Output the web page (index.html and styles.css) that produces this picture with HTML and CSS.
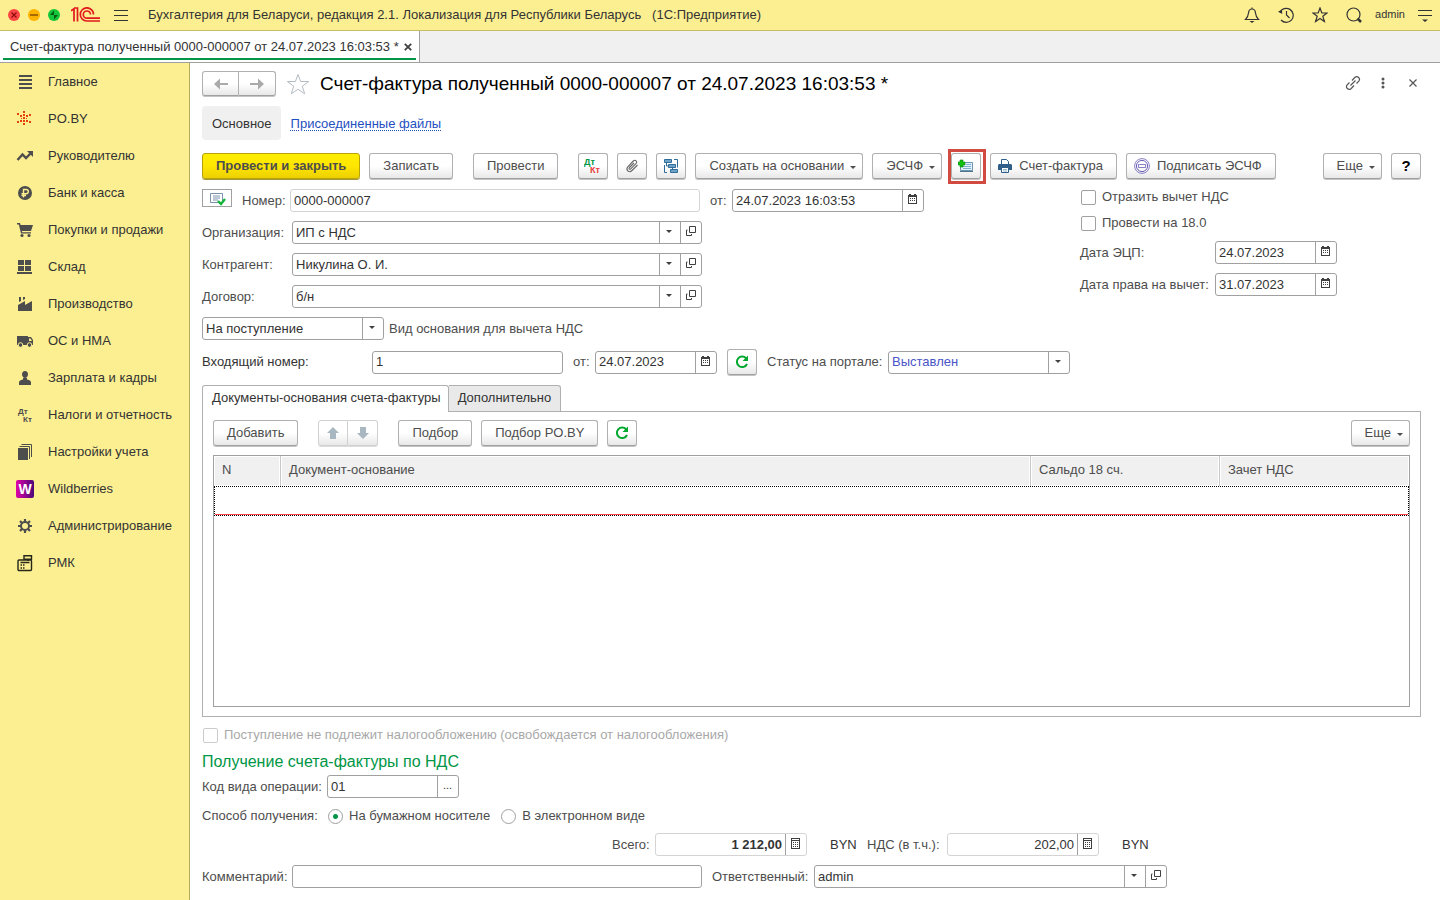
FILE: index.html
```html
<!DOCTYPE html>
<html lang="ru">
<head>
    <meta charset="UTF-8">
    <meta name="viewport" content="width=device-width, initial-scale=1.0">
    <title>Счет-фактура полученный</title>
    <link rel="stylesheet" href="styles.css">
</head>
<body>
    <!-- общие иконки -->
    <svg class="sprite" aria-hidden="true">
        <symbol id="i-calendar" viewBox="0 0 9 10">
            <path fill="#404040" d="M0 1h1V0h2v1h3V0h2v1h1v9H0zM1 3v6h7V3z"/>
            <path fill="#404040" d="M2 4h1v1H2zM4 4h1v1H4zM6 4h1v1H6zM2 6h1v1H2zM4 6h1v1H4zM6 6h1v1H6z"/>
        </symbol>
        <symbol id="i-calc" viewBox="0 0 9 11">
            <path fill="#404040" d="M0 0h9v11H0zM1 1v1h7V1zM1 3v7h7V3z"/>
            <path fill="#404040" d="M2 4h1v1H2zM4 4h1v1H4zM6 4h1v1H6zM2 6h1v1H2zM4 6h1v1H4zM6 6h1v1H6zM2 8h1v1H2zM4 8h1v1H4zM6 8h1v1H6z"/>
        </symbol>
        <symbol id="i-open" viewBox="0 0 10 10">
            <path fill="none" stroke="#404040" d="M3.500.500h6v6h-6zM1.500 4h-1v5.500h5V8"/>
        </symbol>
        <symbol id="i-refresh" viewBox="0 0 14 14">
            <path fill="none" stroke="#00a82d" stroke-width="2" d="M11.200 3.300A5.300 5.300 0 1 0 12 9"/>
            <path fill="#00a82d" d="M13 .500V6H7.500z"/>
        </symbol>
    </svg>

    <header class="titlebar">
        <div class="window-buttons">
            <button class="dot dot-close" aria-label="Закрыть окно"><svg viewBox="0 0 12 12"><path d="M3.500 3.500l5 5m0-5l-5 5" stroke="#8c1010" stroke-width="1.200"/></svg></button>
            <button class="dot dot-min" aria-label="Свернуть"><svg viewBox="0 0 12 12"><path d="M2 6h8" stroke="#9a6400" stroke-width="1.800"/></svg></button>
            <button class="dot dot-max" aria-label="Развернуть"><svg viewBox="0 0 12 12"><path d="M6 1.500v4.500H2zM6 10.500V6h4z" fill="#0a5a14"/></svg></button>
        </div>
        <svg class="logo" viewBox="0 0 30 16" fill="none" stroke="#e1181e" stroke-width="1.700">
            <path d="M0 3.800l3-2v12.700M3 1h3.500v13.500"/>
            <path d="M22.500 7.500A6.600 6.600 0 1 0 16 14H29"/>
            <path d="M19.500 7.500A3.600 3.600 0 1 0 16 11.200H29"/>
        </svg>
        <button class="icon-btn menu-btn" aria-label="Меню"><svg width="14" height="12" viewBox="0 0 14 12"><path d="M0 1.500h14M0 6.500h14M0 11.500h14" stroke="#333"/></svg></button>
        <div class="app-title">Бухгалтерия для Беларуси, редакция 2.1. Локализация для Республики Беларусь &nbsp; (1С:Предприятие)</div>
        <div class="titlebar-tools">
            <button class="icon-btn" aria-label="Уведомления"><svg width="16" height="16" viewBox="0 0 16 16"><path d="M1.500 12.500c2-2 2.700-3.500 3-6.500.2-2.500 1.300-4 3.500-4s3.300 1.500 3.500 4c.3 3 1 4.500 3 6.500zM8 .500V2" fill="none" stroke="#333" stroke-width="1.200"/><path d="M5.500 14h5L8 16z" fill="#333"/></svg></button>
            <button class="icon-btn" aria-label="История"><svg width="16" height="16" viewBox="0 0 16 16"><path d="M1.800 5.500A7 7 0 1 1 3 13M8.500 4v4l3 3" fill="none" stroke="#333" stroke-width="1.200"/><path d="M0 4.500l4-1.500.2 4z" fill="#333"/></svg></button>
            <button class="icon-btn" aria-label="Избранное"><svg width="16" height="16" viewBox="0 0 16 16"><path d="M8 1l1.800 5h5.200l-4.200 3.200 1.600 5.300L8 11.400l-4.400 3.100 1.600-5.300L1 6h5.200z" fill="none" stroke="#333" stroke-width="1.200"/></svg></button>
            <button class="icon-btn" aria-label="Поиск"><svg width="16" height="16" viewBox="0 0 16 16"><circle cx="7.500" cy="7.500" r="6.500" fill="none" stroke="#333" stroke-width="1.200"/><path d="M11.500 11.500l3.500 3.500" stroke="#333" stroke-width="2.500"/></svg></button>
        </div>
        <a class="user" href="#">admin</a>
        <button class="icon-btn" aria-label="Сервис"><svg width="14" height="13" viewBox="0 0 14 13"><path d="M0 1.500h14M0 6.500h14" stroke="#333"/><path d="M4 10.500h6L7 13z" fill="#333"/></svg></button>
    </header>

    <div class="window-tabs">
        <div class="window-tab">
            <span>Счет-фактура полученный 0000-000007 от 24.07.2023 16:03:53 *</span>
            <button class="icon-btn" aria-label="Закрыть вкладку"><svg width="8" height="8" viewBox="0 0 8 8"><path d="M.800.800l6.400 6.400m0-6.400L.800 7.200" stroke="#404040" stroke-width="1.800"/></svg></button>
        </div>
    </div>

    <div class="workspace">
        <nav class="sidebar">
            <a href="#"><svg viewBox="0 0 18 18" fill="#4d4d4d"><path d="M3 2h13v2H3zM3 6h13v2H3zM3 10h13v2H3zM3 14h13v2H3z"/></svg>Главное</a>
            <a href="#"><svg viewBox="0 0 18 18" fill="#e8420c"><path d="M7 1h2v2H7zM1 3h2v2H1zM13 4h2v2h-2zM7 4h2v2H7zM4 5h2v2H4zM10 5h2v2h-2zM7 7h2v2H7zM5 8h1v1H5zM10 8h1v1h-1zM4 10h2v2H4zM7 10h2v2H7zM10 10h2v2h-2zM1 11h2v2H1zM13 11h2v2h-2zM7 13h2v2H7z"/></svg>PO.BY</a>
            <a href="#"><svg viewBox="0 0 18 18"><path d="M1.500 13l5-5.500 3.500 3.500 5-5" fill="none" stroke="#4d4d4d" stroke-width="2.400"/><path d="M11 4h6v6z" fill="#4d4d4d"/></svg>Руководителю</a>
            <a href="#"><svg viewBox="0 0 18 18"><circle cx="9" cy="9" r="7" fill="#4d4d4d"/><path d="M7.500 13.500V5.500h2.700a2 2 0 0 1 0 4.200H5.500M5.500 11.500H10" fill="none" stroke="#fcef91" stroke-width="1.400"/></svg>Банк и касса</a>
            <a href="#"><svg viewBox="0 0 18 18" fill="#4d4d4d"><path d="M1 2h3l.6 2H17l-2 6H5.800l.4 1.200H15v1.300H5L2.800 3.400H1z"/><circle cx="6" cy="14.500" r="1.600"/><circle cx="13" cy="14.500" r="1.600"/></svg>Покупки и продажи</a>
            <a href="#"><svg viewBox="0 0 18 18" fill="#4d4d4d"><path d="M2 2h6v5H2zM9 2h6v5H9zM2 8h6v5H2zM9 8h6v5H9zM1 14h15v2H1z"/></svg>Склад</a>
            <a href="#"><svg viewBox="0 0 18 18" fill="#4d4d4d"><path d="M3 2h2v4L3 7zM7 2h2v2L7 5zM2 10l7-4v4l7-4v10H2z"/></svg>Производство</a>
            <a href="#"><svg viewBox="0 0 18 18" fill="#4d4d4d"><path d="M1 4h11v9H1zM12 5h3l2 3v5h-5z"/><path d="M13 6.500h1.500L16 9h-3z" fill="#fcef91"/><g stroke="#fcef91"><circle cx="4.500" cy="13" r="2.300"/><circle cx="13.500" cy="13" r="2.300"/></g></svg>ОС и НМА</a>
            <a href="#"><svg viewBox="0 0 18 18" fill="#4d4d4d"><path d="M9 2c2 0 3 1.300 3 3.300S10.800 9 9 9 6 7.300 6 5.300 7 2 9 2zM7 9h4v1.500c3 .5 4 1.500 4 3V16H3v-2.500c0-1.500 1-2.500 4-3z"/></svg>Зарплата и кадры</a>
            <a href="#"><svg viewBox="0 0 18 18" class="dtkt"><text x="2" y="8" fill="#4d4d4d">Дт</text><text x="7" y="16" fill="#4d4d4d">Кт</text></svg>Налоги и отчетность</a>
            <a href="#"><svg viewBox="0 0 18 18"><path d="M2 5h10v12H2z" fill="#4d4d4d"/><path d="M3.500 3.500h10V16M5.500 1.500h10V14" fill="none" stroke="#4d4d4d"/></svg>Настройки учета</a>
            <a href="#"><svg viewBox="0 0 18 18"><defs><linearGradient id="wb"><stop offset="0" stop-color="#e000a8"/><stop offset="1" stop-color="#4a0a78"/></linearGradient></defs><rect width="18" height="18" rx="2" fill="url(#wb)"/><text class="wb" x="9" y="14" fill="#fff" text-anchor="middle">W</text></svg>Wildberries</a>
            <a href="#"><svg viewBox="0 0 18 18" fill="none" stroke="#4d4d4d"><circle cx="9" cy="9" r="4" stroke-width="2"/><path d="M9 2v3M9 13v3M2 9h3M13 9h3M4 4l2.200 2.200M11.800 11.800L14 14M14 4l-2.200 2.200M6.200 11.800L4 14" stroke-width="2.200"/></svg>Администрирование</a>
            <a href="#"><svg viewBox="0 0 18 18" fill="none" stroke="#26261a" stroke-width="1.400"><rect x="2" y="6" width="13.500" height="10.500" rx="1"/><path d="M8 1.800h7.500v3.400H8zM12 5v2M4.500 8.500h9"/><path d="M4.500 11h1.500M7 11h1.500M4.500 14h1.500M7 14h1.500" stroke-width="1.600"/></svg>РМК</a>
        </nav>

        <main class="form">
            <div class="form-header">
                <div class="btn-pair history">
                    <button class="btn" aria-label="Назад"><svg width="14" height="12" viewBox="0 0 14 12"><path d="M0 6l6-5.500V5h8v2H6v4.500z" fill="#aaa"/></svg></button>
                    <button class="btn" aria-label="Вперед"><svg width="14" height="12" viewBox="0 0 14 12"><path d="M14 6L8 .500V5H0v2h8v4.500z" fill="#aaa"/></svg></button>
                </div>
                <button class="icon-btn" aria-label="В избранное"><svg width="24" height="22" viewBox="0 0 24 22"><path d="M12 1.500l2.600 7h8l-6.300 4.800 2.400 7.500L12 16.300l-6.700 4.500 2.400-7.500L1.400 8.500h8z" fill="#fff" stroke="#b3bcc4"/></svg></button>
                <h1>Счет-фактура полученный 0000-000007 от 24.07.2023 16:03:53 *</h1>
                <div class="form-header-tools">
                    <button class="icon-btn" aria-label="Ссылка"><svg width="16" height="16" viewBox="0 0 16 16" fill="none" stroke="#555" stroke-width="1.200"><path d="M5.500 10.500l5-5M7 5.500L10 2.300a2.700 2.700 0 0 1 3.800 3.800L11.500 8.500M9 10.500L6 13.700a2.700 2.700 0 0 1-3.800-3.800L4.500 7.500"/></svg></button>
                    <button class="icon-btn" aria-label="Еще действия"><svg width="4" height="12" viewBox="0 0 4 12" fill="#555"><circle cx="2" cy="2" r="1.500"/><circle cx="2" cy="6" r="1.500"/><circle cx="2" cy="10" r="1.500"/></svg></button>
                    <button class="icon-btn" aria-label="Закрыть"><svg width="8" height="8" viewBox="0 0 8 8"><path d="M.500.500l7 7m0-7l-7 7" stroke="#555" stroke-width="1.200"/></svg></button>
                </div>
            </div>

            <div class="form-nav">
                <a class="active" href="#">Основное</a>
                <a href="#"><span>Присоединенные файлы</span></a>
            </div>

            <div class="toolbar">
                <div class="btn-group">
                    <button class="btn btn-primary">Провести и закрыть</button>
                    <button class="btn">Записать</button>
                </div>
                <button class="btn">Провести</button>
                <div class="btn-group">
                    <button class="btn btn-icon" aria-label="Проводки"><svg class="dtkt" width="18" height="18" viewBox="0 0 18 18"><text x="0" y="8" fill="#009646">Дт</text><text x="6" y="16" fill="#e63c3c">Кт</text></svg></button>
                    <button class="btn btn-icon" aria-label="Файлы"><svg width="16" height="16" viewBox="0 0 16 16"><path d="M13.500 7L8 12.500c-3 3-6.800-.800-4-4L9.300 3c2-1.900 4.600.500 2.700 2.600l-5.300 5.300c-1.200 1-2.300-.300-1.300-1.400L10 5" fill="none" stroke="#666" stroke-width="1.100"/></svg></button>
                    <button class="btn btn-icon" aria-label="Структура подчиненности"><svg width="16" height="16" viewBox="0 0 16 16" fill="#6fa3c7" stroke="#2f6d9b"><path d="M1.500 1.500h7v3h-7zM5.500 6.500h7v3h-7zM7.500 11.500h7v3h-7z"/><path d="M11 1.500h3.500v8M4 14.500H1.500V7M3.500 4.500v3.500h2M9.500 9.500v2" fill="none"/></svg></button>
                    <button class="btn btn-menu">Создать на основании</button>
                    <button class="btn btn-menu">ЭСЧФ</button>
                    <button class="btn btn-icon marked" aria-label="Добавить ЭСЧФ"><svg width="16" height="14" viewBox="0 0 16 14"><path d="M2.500 3.500h12v8h-12z" fill="#e6f2fb" stroke="#6c93ac"/><path d="M2 12.500h13" stroke="#4c7590"/><path d="M8 5.500h5M5 7.500h8M5 9.500h8" stroke="#7fb0d0"/><path d="M2 1h3v2h2v3H5v2H2V6H0V3h2z" fill="#10c010" stroke="#078507" stroke-width=".600"/></svg></button>
                    <button class="btn btn-with-icon"><svg width="14" height="14" viewBox="0 0 14 14"><path d="M3.500 5V.500h5l2 2V5" fill="#fff" stroke="#2f5f88"/><path d="M1 5h12l1 1v5H0V6z" fill="#2f5f88"/><path d="M3.500 8.500h7v5h-7z" fill="#fff" stroke="#2f5f88"/><path d="M5 10.500h4M5 12h4" stroke="#9db8cc"/></svg>Счет-фактура</button>
                    <button class="btn btn-with-icon"><svg width="16" height="16" viewBox="0 0 16 16" fill="none" stroke="#6a5fb8"><circle cx="8" cy="8" r="7.400" stroke-width=".800"/><circle cx="8" cy="8" r="5.600"/><path d="M4.500 6.500h7v3h-7z" stroke-width=".800"/></svg>Подписать ЭСЧФ</button>
                </div>
                <div class="btn-group toolbar-right">
                    <button class="btn btn-menu">Еще</button>
                    <button class="btn btn-icon help">?</button>
                </div>
            </div>

            <div class="form-columns">
                <div class="form-left">
                    <div class="row">
                        <button class="state-btn" aria-label="Проведен"><svg width="16" height="14" viewBox="0 0 16 14"><path d="M.500 1.500h12v9H.500z" fill="#fff" stroke="#7b93ad"/><path d="M3 4h7M3 6h7M3 8h5" stroke="#7b93ad"/><path d="M8 9l3 3 4-5" fill="none" stroke="#12b53a" stroke-width="2.400"/></svg></button>
                        <label for="number">Номер:</label>
                        <div class="field readonly w-main"><input id="number" type="text" value="0000-000007" readonly></div>
                        <label class="label-from" for="date">от:</label>
                        <div class="field w-datetime"><input id="date" type="text" value="24.07.2023 16:03:53"><button aria-label="Календарь"><svg width="9" height="10"><use href="#i-calendar"/></svg></button></div>
                    </div>
                    <div class="row">
                        <label class="label-col" for="org">Организация:</label>
                        <div class="field w-main"><select id="org"><option>ИП с НДС</option></select><button aria-label="Открыть"><svg width="10" height="10"><use href="#i-open"/></svg></button></div>
                    </div>
                    <div class="row">
                        <label class="label-col" for="partner">Контрагент:</label>
                        <div class="field w-main"><select id="partner"><option>Никулина О. И.</option></select><button aria-label="Открыть"><svg width="10" height="10"><use href="#i-open"/></svg></button></div>
                    </div>
                    <div class="row">
                        <label class="label-col" for="contract">Договор:</label>
                        <div class="field w-main"><select id="contract"><option>б/н</option></select><button aria-label="Открыть"><svg width="10" height="10"><use href="#i-open"/></svg></button></div>
                    </div>
                    <div class="row">
                        <div class="field w-kind"><select id="kind"><option>На поступление</option></select></div>
                        <label for="kind" class="label-after">Вид основания для вычета НДС</label>
                    </div>
                </div>

                <div class="form-right">
                    <label class="check"><input type="checkbox">Отразить вычет НДС</label>
                    <label class="check"><input type="checkbox">Провести на 18.0</label>
                    <div class="row">
                        <label class="label-date" for="date-sign">Дата ЭЦП:</label>
                        <div class="field w-date"><input id="date-sign" type="text" value="24.07.2023"><button aria-label="Календарь"><svg width="9" height="10"><use href="#i-calendar"/></svg></button></div>
                    </div>
                    <div class="row">
                        <label class="label-date" for="date-vat">Дата права на вычет:</label>
                        <div class="field w-date"><input id="date-vat" type="text" value="31.07.2023"><button aria-label="Календарь"><svg width="9" height="10"><use href="#i-calendar"/></svg></button></div>
                    </div>
                </div>
            </div>

            <div class="row incoming">
                <label class="label-incoming" for="in-number">Входящий номер:</label>
                <div class="field w-incoming"><input id="in-number" type="text" value="1"></div>
                <label class="label-from" for="in-date">от:</label>
                <div class="field w-date"><input id="in-date" type="text" value="24.07.2023"><button aria-label="Календарь"><svg width="9" height="10"><use href="#i-calendar"/></svg></button></div>
                <button class="btn btn-icon refresh" aria-label="Обновить статус"><svg width="14" height="14"><use href="#i-refresh"/></svg></button>
                <label class="label-status" for="status">Статус на портале:</label>
                <div class="field w-kind status"><select id="status"><option>Выставлен</option></select></div>
            </div>

            <div class="tabs">
                <button class="tab active">Документы-основания счета-фактуры</button>
                <button class="tab">Дополнительно</button>
            </div>
            <section class="tab-panel">
                <div class="toolbar panel-toolbar">
                    <button class="btn">Добавить</button>
                    <div class="btn-pair disabled">
                        <button class="btn" aria-label="Вверх" disabled><svg width="12" height="12" viewBox="0 0 12 12"><path d="M6 0l6 6H9v6H3V6H0z" fill="#a9b8c0"/></svg></button>
                        <button class="btn" aria-label="Вниз" disabled><svg width="12" height="12" viewBox="0 0 12 12"><path d="M6 12l6-6H9V0H3v6H0z" fill="#a9b8c0"/></svg></button>
                    </div>
                    <div class="btn-group">
                        <button class="btn">Подбор</button>
                        <button class="btn">Подбор PO.BY</button>
                        <button class="btn btn-icon" aria-label="Обновить"><svg width="14" height="14"><use href="#i-refresh"/></svg></button>
                    </div>
                    <button class="btn btn-menu toolbar-right">Еще</button>
                </div>
                <div class="table-box">
                    <table>
                        <thead>
                            <tr>
                                <th class="col-n">N</th>
                                <th>Документ-основание</th>
                                <th class="col-sum">Сальдо 18 сч.</th>
                                <th class="col-sum">Зачет НДС</th>
                            </tr>
                        </thead>
                        <tbody>
                            <tr>
                                <td colspan="4"><div class="empty-row"></div></td>
                            </tr>
                        </tbody>
                    </table>
                </div>
            </section>

            <label class="check check-disabled"><input type="checkbox" disabled>Поступление не подлежит налогообложению (освобождается от налогообложения)</label>

            <h2>Получение счета-фактуры по НДС</h2>

            <div class="row">
                <label class="label-short" for="op-code">Код вида операции:</label>
                <div class="field w-code"><input id="op-code" type="text" value="01"><button class="dots" aria-label="Выбрать">...</button></div>
            </div>

            <div class="row methods">
                <span class="label-short">Способ получения:</span>
                <label class="radio"><input type="radio" name="method" checked>На бумажном носителе</label>
                <label class="radio"><input type="radio" name="method">В электронном виде</label>
            </div>

            <div class="row totals">
                <label for="total">Всего:</label>
                <div class="field readonly w-sum total"><input id="total" type="text" value="1 212,00" readonly><button aria-label="Калькулятор"><svg width="9" height="11"><use href="#i-calc"/></svg></button></div>
                <span class="currency">BYN</span>
                <label class="label-vat" for="vat">НДС (в т.ч.):</label>
                <div class="field readonly w-sum"><input id="vat" type="text" value="202,00" readonly><button aria-label="Калькулятор"><svg width="9" height="11"><use href="#i-calc"/></svg></button></div>
                <span class="currency">BYN</span>
            </div>

            <div class="row">
                <label class="label-col" for="comment">Комментарий:</label>
                <div class="field w-main"><input id="comment" type="text"></div>
                <label class="label-owner" for="owner">Ответственный:</label>
                <div class="field w-owner"><select id="owner"><option>admin</option></select><button aria-label="Открыть"><svg width="10" height="10"><use href="#i-open"/></svg></button></div>
            </div>
        </main>
    </div>
</body>
</html>
```
FILE: styles.css
```css
* {
    box-sizing: border-box;
}

body {
    margin: 0;
    min-height: 100vh;
    display: flex;
    flex-direction: column;
    background: #fff;
    color: #4d4d4d;
    font-family: "Liberation Sans", Arial, sans-serif;
    font-size: 13px;
    line-height: 16px;
}

button,
input,
select {
    font: inherit;
    color: inherit;
    margin: 0;
}

button {
    cursor: pointer;
}

svg {
    display: block;
    flex: none;
}

.sprite {
    display: none;
}

.icon-btn {
    padding: 0;
    border: none;
    background: none;
}

/* заголовок окна */
.titlebar {
    display: flex;
    align-items: center;
    height: 31px;
    padding: 0 8px;
    background: #fcef91;
    border-bottom: 1px solid #c9bd62;
    color: #333;
}

.window-buttons {
    display: flex;
    gap: 8px;
}

.dot {
    width: 12px;
    height: 12px;
    padding: 0;
    border: none;
    border-radius: 50%;
}

.dot-close {
    background: #fb4646;
}

.dot-min {
    background: #fdb300;
}

.dot-max {
    background: #13c63a;
}

.logo {
    width: 30px;
    height: 16px;
    margin-left: 11px;
}

.menu-btn {
    margin: 0 20px 0 13px;
}

.app-title {
    flex: 1;
    white-space: nowrap;
}

.titlebar-tools {
    display: flex;
    gap: 18px;
}

.user {
    margin: 0 13px 2px;
    color: #333;
    font-size: 11px;
    text-decoration: none;
}

.window-tabs {
    display: flex;
    height: 32px;
    background: #f0f0f0;
    border-bottom: 1px solid #a0a0a0;
}

.window-tab {
    display: flex;
    align-items: center;
    gap: 5px;
    padding: 0 7px 0 10px;
    background: linear-gradient(#009646, #009646) 3px 27px / calc(100% - 6px) 2px no-repeat #fff;
    border-right: 1px solid #a0a0a0;
    color: #333;
    white-space: nowrap;
}

.workspace {
    flex: 1;
    display: flex;
}

/* разделы */
.sidebar {
    flex: none;
    width: 190px;
    background: #fcef91;
    border-right: 1px solid #b5aa5c;
}

.sidebar a {
    display: flex;
    align-items: center;
    gap: 14px;
    height: 37px;
    padding-left: 16px;
    color: #333;
    text-decoration: none;
    white-space: nowrap;
}

.sidebar svg {
    width: 18px;
    height: 18px;
}

.dtkt {
    font-size: 8px;
    font-weight: bold;
}

.btn .dtkt {
    font-size: 9px;
}

.wb {
    font-size: 14px;
    font-weight: bold;
}

/* форма */
.form {
    flex: 1;
    min-width: 0;
    display: flex;
    flex-direction: column;
    padding: 8px 19px 12px 12px;
}

.form-header {
    display: flex;
    align-items: center;
    height: 25px;
}

.form-header h1 {
    margin: 0 0 0 10px;
    color: #000;
    font-size: 19px;
    font-weight: normal;
    line-height: 24px;
    white-space: nowrap;
}

.form-header-tools {
    display: flex;
    align-items: center;
    gap: 14px;
    margin-left: auto;
    padding-bottom: 2px;
}

.form-header-tools .icon-btn {
    display: flex;
    justify-content: center;
    width: 16px;
}

.form-nav {
    display: flex;
    margin-top: 10px;
}

.form-nav a {
    padding: 10px 9px 8px 10px;
    border-radius: 4px;
    color: #1f4fbf;
    text-decoration: none;
}

.form-nav a span {
    text-decoration: underline dotted 1px;
    text-underline-offset: 2px;
}

.form-nav .active {
    background: #f0f0f0;
    color: #333;
}

/* кнопки */
.btn {
    display: flex;
    align-items: center;
    justify-content: center;
    height: 26px;
    padding: 0 13px;
    border: 1px solid #b0b0b0;
    border-bottom-color: #a0a0a0;
    border-radius: 3px;
    background: linear-gradient(#fff 50%, #e8e8e8);
    box-shadow: 0 1px 0 #c4c4c4;
    color: #4d4d4d;
    white-space: nowrap;
}

.btn:hover {
    background: #f0f0f0;
}

.btn-primary {
    border-color: #b8a20a;
    background: linear-gradient(#ffee00, #ffe600 50%, #ecd000);
    box-shadow: 0 1px 0 #a8983c;
    font-weight: bold;
}

.btn-icon {
    width: 30px;
    padding: 0;
}

.btn-with-icon {
    gap: 7px;
    padding-left: 7px;
}

.btn-menu {
    gap: 6px;
    padding-right: 6px;
}

.btn-menu::after {
    content: "";
    margin-top: 3px;
    border: 3px solid transparent;
    border-top-color: #4d4d4d;
    border-bottom: none;
}

.help {
    color: #000;
    font-size: 15px;
    font-weight: bold;
}

.btn-pair {
    display: flex;
}

.btn-pair .btn {
    width: 30px;
    padding: 0;
}

.btn-pair .btn:first-child {
    border-radius: 3px 0 0 3px;
}

.btn-pair .btn:last-child {
    border-left: none;
    border-radius: 0 3px 3px 0;
}

.history {
    margin-right: 10px;
}

.history .btn {
    width: 37px;
    height: 25px;
}

.disabled .btn {
    border-color: #d0d0d0;
    box-shadow: 0 1px 0 #dcdcdc;
}

.toolbar {
    display: flex;
    gap: 20px;
    margin-top: 13px;
}

.btn-group {
    display: flex;
    gap: 9px;
}

.toolbar-right {
    margin-left: auto;
}

.marked {
    position: relative;
}

/* рамка выделения */
.marked::after {
    content: "";
    position: absolute;
    inset: -5px -6px -6px -4px;
    border: 3px solid #d24b40;
}

/* поля */
.form-columns {
    display: flex;
    justify-content: space-between;
    margin-top: 10px;
}

.form-left {
    display: flex;
    flex-direction: column;
    gap: 9px;
}

.form-right {
    width: 341px;
}

.row {
    display: flex;
    align-items: center;
    white-space: nowrap;
}

.field {
    display: flex;
    flex: none;
    height: 23px;
    border: 1px solid #a0a0a0;
    border-radius: 3px;
    background: #fff;
    color: #333;
    overflow: hidden;
}

.field input,
.field select {
    flex: 1;
    min-width: 0;
    padding: 0 3px;
    border: none;
    outline: none;
    background: none;
}

.field select {
    appearance: none;
    background:
        url("data:image/svg+xml,%3Csvg xmlns='http://www.w3.org/2000/svg' width='6' height='3'%3E%3Cpath d='M0 0h6L3 3z' fill='%23404040'/%3E%3C/svg%3E") right 8px top 8px no-repeat,
        linear-gradient(#a0a0a0, #a0a0a0) right 20px top / 1px 100% no-repeat;
}

.field button {
    display: flex;
    align-items: center;
    justify-content: center;
    width: 21px;
    padding: 0 1px 3px 0;
    border: none;
    border-left: 1px solid #a0a0a0;
    background: none;
}

.field .dots {
    font-size: 11px;
}

.field.readonly {
    border-color: #d4d4d4;
}

.w-main {
    width: 410px;
}

.w-datetime {
    width: 192px;
}

.w-date {
    width: 122px;
}

.w-kind {
    width: 182px;
}

.w-incoming {
    width: 191px;
}

.w-code {
    width: 132px;
}

.w-sum {
    width: 152px;
}

.w-owner {
    width: 353px;
}

.w-sum input {
    text-align: right;
}

.total input {
    font-weight: bold;
}

.field.status {
    color: #4a55c8;
}

.label-col {
    width: 90px;
}

.label-from {
    width: 32px;
    padding-left: 10px;
}

.label-after {
    margin-left: 5px;
}

.label-date {
    width: 135px;
}

.label-incoming {
    width: 170px;
    color: #333;
}

.label-status {
    width: 121px;
}

.label-short {
    width: 125px;
}

.label-owner {
    width: 112px;
    padding-left: 10px;
}

.state-btn {
    align-self: flex-start;
    width: 30px;
    height: 18px;
    margin-right: 10px;
    padding: 1px 0 0 7px;
    border: 1px solid #a0a0a0;
    background: #fff;
}

.state-btn + label {
    width: 48px;
}

.check {
    display: flex;
    align-items: center;
    gap: 6px;
}

.check input,
.radio input {
    appearance: none;
    width: 15px;
    height: 15px;
    border: 1px solid #a0a0a0;
    border-radius: 2px;
    background: #fff;
}

.form-right .check {
    margin: 0 0 10px 1px;
}

.form-right .row {
    margin-bottom: 9px;
}

.refresh {
    margin: 0 10px;
}

.incoming {
    margin-top: 9px;
}

/* вкладки и таблица */
.tabs {
    display: flex;
    margin-top: 10px;
}

.tab {
    height: 26px;
    padding: 0 9px 2px;
    border: 1px solid #b0b0b0;
    border-bottom: none;
    border-left: none;
    border-radius: 0 3px 0 0;
    background: #e9e9e9;
    color: #333;
}

.tab.active {
    height: 27px;
    margin-bottom: -1px;
    padding: 0 7px 3px 9px;
    border-left: 1px solid #b0b0b0;
    border-radius: 3px 3px 0 0;
    background: #fff;
    z-index: 1;
}

.tab-panel {
    flex: 1;
    display: flex;
    flex-direction: column;
    min-height: 200px;
    padding: 8px 10px 9px;
    border: 1px solid #b0b0b0;
}

.panel-toolbar {
    margin: 0 0 9px;
}

.table-box {
    flex: 1;
    border: 1px solid #a0a0a0;
}

table {
    width: 100%;
    border-collapse: separate;
    border-spacing: 0;
    table-layout: fixed;
}

th {
    height: 30px;
    padding: 0 8px 2px;
    border-right: 1px solid #c8c8c8;
    background: #f0f0f0;
    box-shadow: inset 0 0 0 1px #fff;
    font-weight: normal;
    text-align: left;
}

th:last-child {
    border-right: none;
}

td {
    padding: 0;
}

.col-n {
    width: 67px;
}

.col-sum {
    width: 189px;
}

.empty-row {
    height: 30px;
    border: 1px dotted #000;
    box-shadow: inset 0 -1px 0 #ff4040;
}

/* низ формы */
.check-disabled {
    margin: 10px 0 0 1px;
    color: #a8a8a8;
}

.check-disabled input {
    border-color: #ccc;
}

h2 {
    margin: 9px 0 3px;
    color: #009646;
    font-size: 16px;
    font-weight: normal;
    line-height: 20px;
}

.methods {
    margin: 10px 0 9px;
}

.radio {
    display: flex;
    align-items: center;
    gap: 6px;
    margin: 0 10px 0 1px;
}

.radio input {
    border-radius: 50%;
}

.radio input:checked {
    background: radial-gradient(circle, #009646 2px, #fff 3px);
}

.totals {
    margin-bottom: 9px;
    padding-left: 410px;
}

.totals label {
    width: 43px;
}

.totals .label-vat {
    width: 80px;
}

.currency {
    width: 60px;
    padding-left: 23px;
    color: #333;
}
```
